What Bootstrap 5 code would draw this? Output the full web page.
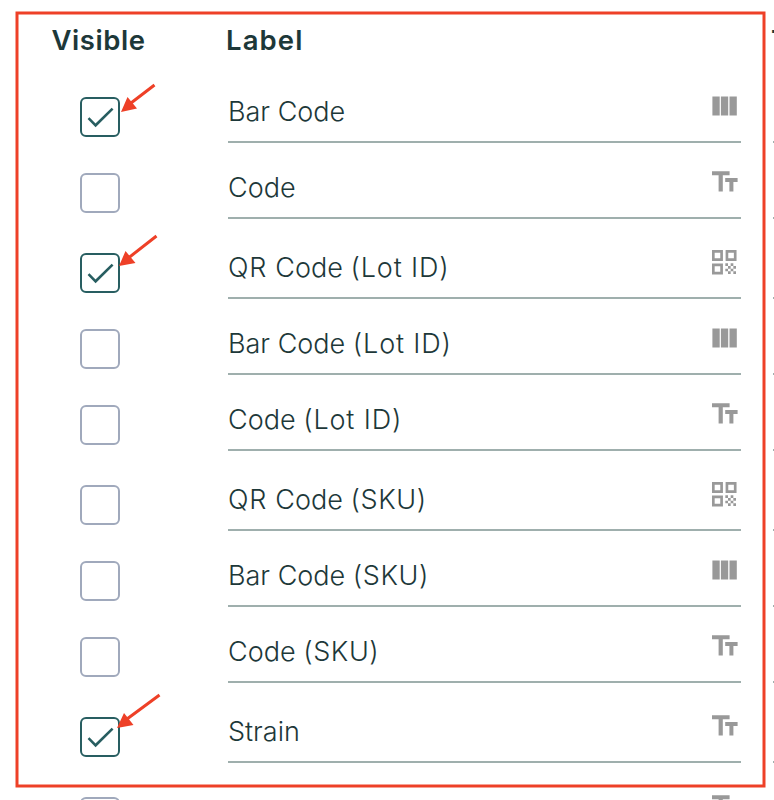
<!DOCTYPE html>
<html lang="en">
<head>
<meta charset="utf-8">
<meta name="viewport" content="width=device-width, initial-scale=1">
<title>Columns</title>
<link href="https://cdn.jsdelivr.net/npm/bootstrap@5.3.0/dist/css/bootstrap.min.css" rel="stylesheet">
<style>
  body { height: 800px; overflow: hidden; background: #fff; color: #1d3839; font-family: Inter, "Open Sans", sans-serif; }
  .sheet { height: 800px; }
  .head-row { height: 67px; font-size: 27.5px; font-weight: 600; line-height: 40px; padding-top: 20px; letter-spacing: .55px; }
  .head-label { letter-spacing: 1.1px; }
  .col-visible { width: 228px; flex: none; }
  .head-row .col-visible { padding-left: 51.5px; width: 226px; }
  .col-label { width: 513px; flex: none; }
  .head-next { margin-left: 32px; }
  .field-row { height: 76px; }
  .field-row.tall { height: 80px; }
  .field-row .col-visible { padding: 0 0 6px 80px; }
  .box.form-check-input { width: 40px; height: 40px; margin: 0; border: 2px solid #a0a9bc; border-radius: 6px; background: #fff; display: block; box-shadow: none; }
  .box.form-check-input:checked { border-color: #285e61; background: #fff url("data:image/svg+xml,%3Csvg xmlns='http://www.w3.org/2000/svg' viewBox='0 0 36 36'%3E%3Cpath d='M6.5 19.2L13.6 26.3L30.6 9.6' fill='none' stroke='%23285e61' stroke-width='2.6'/%3E%3C/svg%3E") 0 0/36px 36px no-repeat; }
  .field { border-bottom: 2px solid #9fafad; padding-bottom: 9px; font-size: 27px; font-weight: 300; line-height: 40px; }
  .field svg { width: 32px; height: 32px; fill: #999; margin: 0 1px 10px 0; }
  .lot { letter-spacing: .85px; }
  .sku { letter-spacing: .6px; }
  .qr { letter-spacing: .7px; }
  .rest { width: 1px; margin-left: 32px; border-bottom: 2px solid #9fafad; }
  .marks { position: absolute; left: 0; top: 0; pointer-events: none; }
</style>
</head>
<body>
<svg class="d-none">
  <symbol id="bars" viewBox="0 0 32 32"><path d="M3.8 6.5h7.3v19H3.8zM12.3 6.5h7.3v19h-7.3zM20.9 6.5h7.3v19h-7.3z" transform="translate(.6 0)"/></symbol>
  <symbol id="text" viewBox="0 0 32 32"><path d="M4 5.2h17.6v4H14.8v16.4h-4.2V9.2H4zM17.2 12h12.4v4h-4.2v9.6h-4V16h-4.2z"/></symbol>
  <symbol id="qr" viewBox="0 0 24 24"><path fill-rule="evenodd" d="M3 3h8.2v8.2H3zM5 5v4.2h4.2V5zM13.2 3h8.2v8.2h-8.2zM15.2 5v4.2h4.2V5zM3 13.2h8.2v8.2H3zM5 15.2v4.2h4.2v-4.2zM13 13h2v2h-2zM15 15h2v2h-2zM13 17h2v2h-2zM15 19h2v2h-2zM17 13h2v2h-2zM17 17h2v2h-2zM19 15h2v2h-2zM19 19h2v2h-2z"/></symbol>
</svg>
<main class="sheet position-relative overflow-hidden d-flex flex-column">
  <div class="head-row d-flex flex-shrink-0">
    <div class="col-visible"><span>Visible</span></div>
    <div class="col-label"><span class="head-label">Label</span></div>
    <div class="head-next">Type</div>
  </div>
  <div class="field-row d-flex flex-shrink-0"><div class="col-visible d-flex align-items-end"><input class="box form-check-input" type="checkbox" checked></div><div class="col-label field d-flex justify-content-between align-items-end"><span>Bar Code</span><svg><use href="#bars"/></svg></div><div class="rest"></div></div>
  <div class="field-row d-flex flex-shrink-0"><div class="col-visible d-flex align-items-end"><input class="box form-check-input" type="checkbox"></div><div class="col-label field d-flex justify-content-between align-items-end"><span>Code</span><svg><use href="#text"/></svg></div><div class="rest"></div></div>
  <div class="field-row tall d-flex flex-shrink-0"><div class="col-visible d-flex align-items-end"><input class="box form-check-input" type="checkbox" checked></div><div class="col-label field d-flex justify-content-between align-items-end"><span><span class="qr">QR </span>Code <span class="lot">(Lot ID)</span></span><svg><use href="#qr"/></svg></div><div class="rest"></div></div>
  <div class="field-row d-flex flex-shrink-0"><div class="col-visible d-flex align-items-end"><input class="box form-check-input" type="checkbox"></div><div class="col-label field d-flex justify-content-between align-items-end"><span>Bar Code <span class="lot">(Lot ID)</span></span><svg><use href="#bars"/></svg></div><div class="rest"></div></div>
  <div class="field-row d-flex flex-shrink-0"><div class="col-visible d-flex align-items-end"><input class="box form-check-input" type="checkbox"></div><div class="col-label field d-flex justify-content-between align-items-end"><span>Code <span class="lot">(Lot ID)</span></span><svg><use href="#text"/></svg></div><div class="rest"></div></div>
  <div class="field-row tall d-flex flex-shrink-0"><div class="col-visible d-flex align-items-end"><input class="box form-check-input" type="checkbox"></div><div class="col-label field d-flex justify-content-between align-items-end"><span><span class="qr">QR </span>Code <span class="sku">(SKU)</span></span><svg><use href="#qr"/></svg></div><div class="rest"></div></div>
  <div class="field-row d-flex flex-shrink-0"><div class="col-visible d-flex align-items-end"><input class="box form-check-input" type="checkbox"></div><div class="col-label field d-flex justify-content-between align-items-end"><span>Bar Code <span class="sku">(SKU)</span></span><svg><use href="#bars"/></svg></div><div class="rest"></div></div>
  <div class="field-row d-flex flex-shrink-0"><div class="col-visible d-flex align-items-end"><input class="box form-check-input" type="checkbox"></div><div class="col-label field d-flex justify-content-between align-items-end"><span>Code <span class="sku">(SKU)</span></span><svg><use href="#text"/></svg></div><div class="rest"></div></div>
  <div class="field-row tall d-flex flex-shrink-0"><div class="col-visible d-flex align-items-end"><input class="box form-check-input" type="checkbox" checked></div><div class="col-label field d-flex justify-content-between align-items-end"><span>Strain</span><svg><use href="#text"/></svg></div><div class="rest"></div></div>
  <div class="field-row tall d-flex flex-shrink-0"><div class="col-visible d-flex align-items-end"><input class="box form-check-input" type="checkbox"></div><div class="col-label field d-flex justify-content-end align-items-end"><svg><use href="#text"/></svg></div><div class="rest"></div></div>
  <svg class="marks" width="774" height="800" fill="none" stroke="#ee4027" stroke-width="3">
    <rect x="17" y="13" width="747" height="773"/>
    <path d="M154.5 85L131 103M156.500 236L129 257.500M159.500 695L127 719"/>
    <path fill="#ee4027" stroke="none" d="M121 112L127.500 97L137 108.500zM119 266L125.500 251L135.500 263zM117 728L124 713L133.500 725z"/>
  </svg>
</main>
</body>
</html>
